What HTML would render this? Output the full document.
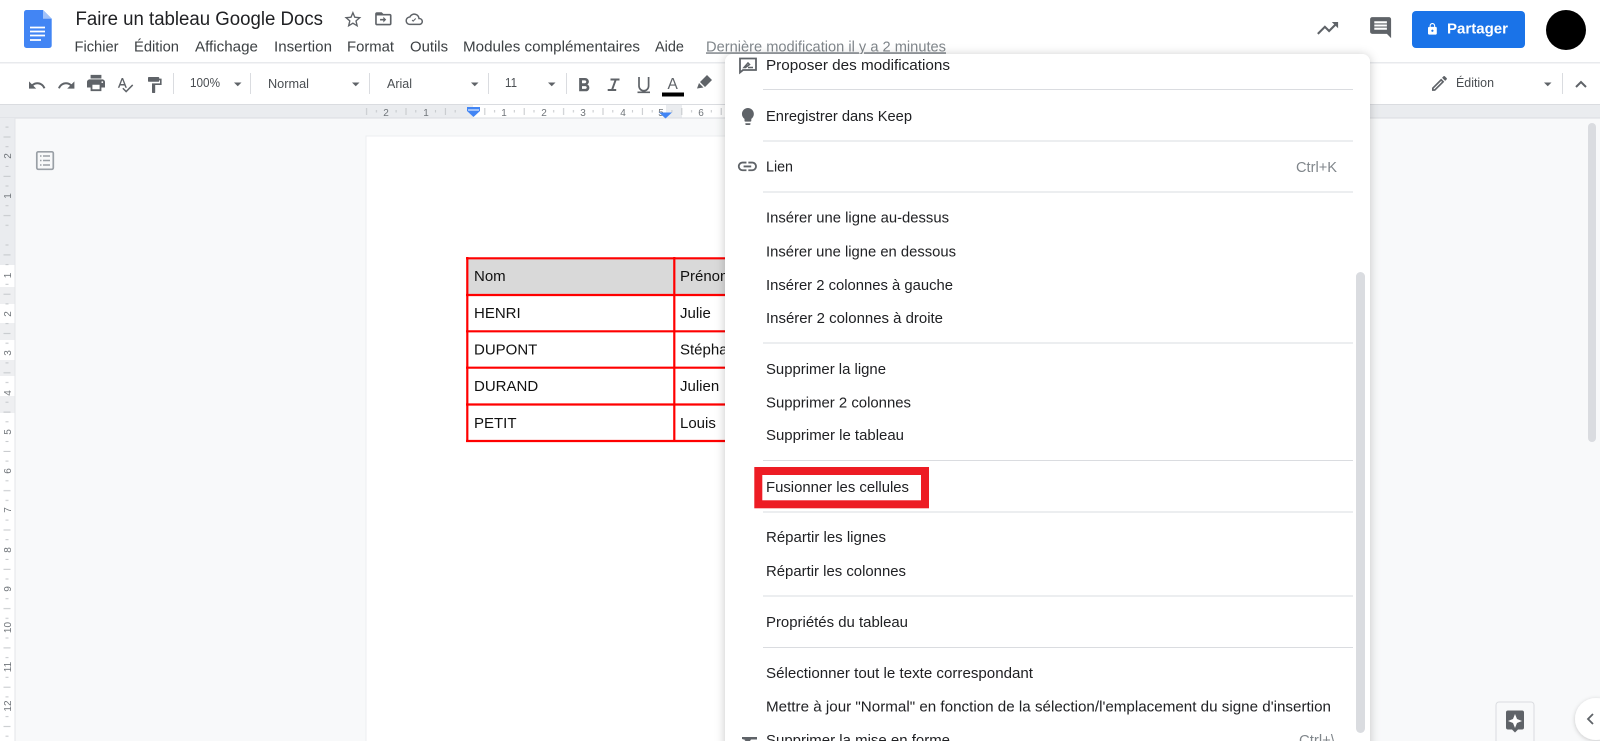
<!DOCTYPE html>
<html lang="fr">
<head>
<meta charset="utf-8">
<title>Faire un tableau Google Docs</title>
<style>
html,body{margin:0;padding:0;width:1600px;height:741px;overflow:hidden;background:#f8f9fa}
svg{display:block;font-family:"Liberation Sans",Arial,sans-serif;filter:blur(.3px)}
.m{font-size:15px;fill:#202124}
.h{font-size:15px;fill:#3c4043}
.t{font-size:13px;fill:#4a4e52}
.c{font-size:15px;fill:#111}
.r{font-size:10px;fill:#70757a;text-anchor:middle}
.i{fill:#5f6368}
</style>
</head>
<body>
<svg width="1600" height="741" viewBox="0 0 1600 741" xmlns="http://www.w3.org/2000/svg">
<defs>
<filter id="sh" x="-5%" y="-5%" width="110%" height="110%"><feDropShadow dx="0" dy="1" stdDeviation="5" flood-color="#000" flood-opacity=".22"/></filter>
<filter id="s2" x="-30%" y="-30%" width="160%" height="160%"><feDropShadow dx="0" dy="1" stdDeviation="2" flood-color="#000" flood-opacity=".2"/></filter>
<pattern id="tx" x="465" y="104" width="39.4" height="14" patternUnits="userSpaceOnUse">
<rect x="9.4" y="6" width="1" height="2.500" fill="#c4c7ca"/><rect x="29.100" y="6" width="1" height="2.500" fill="#c4c7ca"/><rect x="19.300" y="4" width="1" height="7" fill="#c4c7ca"/>
</pattern>
<pattern id="ty" x="0" y="156.500" width="15" height="39.3" patternUnits="userSpaceOnUse">
<rect x="5.500" y="9.400" width="3" height="1" fill="#c4c7ca"/><rect x="5.500" y="29" width="3" height="1" fill="#c4c7ca"/><rect x="3.500" y="19.300" width="7" height="1" fill="#c4c7ca"/>
</pattern>
</defs>

<!-- backgrounds -->
<rect width="1600" height="741" fill="#f8f9fa"/>
<rect width="1600" height="62" fill="#fff"/>
<rect y="62" width="1600" height="1.500" fill="#e8eaed"/>
<rect y="63.500" width="1600" height="40.500" fill="#fff"/>
<rect y="104" width="1600" height="14" fill="#eaecef"/>
<rect y="104" width="1600" height="1" fill="#dadce0"/>
<rect y="117.500" width="1600" height="1" fill="#dadce0"/>

<!-- horizontal ruler -->
<rect x="473" y="105" width="193" height="12.500" fill="#fff"/>
<rect x="682" y="105" width="60" height="12.500" fill="#fff"/>
<rect x="360" y="104" width="380" height="14" fill="url(#tx)"/>
<text class="r" x="386" y="116">2</text><text class="r" x="426" y="116">1</text>
<text class="r" x="504" y="116">1</text><text class="r" x="544" y="116">2</text>
<text class="r" x="583" y="116">3</text><text class="r" x="623" y="116">4</text>
<text class="r" x="661" y="116">5</text><text class="r" x="701" y="116">6</text>
<path d="M467 107h13v4l-6.500 6-6.500-6z" fill="#4285f4"/><rect x="468" y="109.500" width="11" height="1" fill="#fff"/>
<path d="M659 112.500h13l-6.500 6z" fill="#4285f4"/>

<!-- vertical ruler -->
<rect x="0" y="118" width="15" height="623" fill="#fff"/>
<rect x="0" y="118" width="15" height="147" fill="#eaecef"/>
<rect x="0" y="287" width="15" height="17" fill="#eeeff1"/>
<rect x="0" y="323" width="15" height="17" fill="#eeeff1"/>
<rect x="0" y="360" width="15" height="16" fill="#eeeff1"/>
<rect x="0" y="396" width="15" height="17" fill="#eeeff1"/>
<rect x="14.500" y="118" width="1" height="623" fill="#e3e5e8"/>
<rect x="0" y="118" width="14" height="623" fill="url(#ty)"/>
<text class="r" transform="translate(11,156) rotate(-90)">2</text>
<text class="r" transform="translate(11,196) rotate(-90)">1</text>
<text class="r" transform="translate(11,275.500) rotate(-90)">1</text>
<text class="r" transform="translate(11,314) rotate(-90)">2</text>
<text class="r" transform="translate(11,353) rotate(-90)">3</text>
<text class="r" transform="translate(11,393) rotate(-90)">4</text>
<text class="r" transform="translate(11,432) rotate(-90)">5</text>
<text class="r" transform="translate(11,471) rotate(-90)">6</text>
<text class="r" transform="translate(11,510) rotate(-90)">7</text>
<text class="r" transform="translate(11,550) rotate(-90)">8</text>
<text class="r" transform="translate(11,589) rotate(-90)">9</text>
<text class="r" transform="translate(11,627.500) rotate(-90)">10</text>
<text class="r" transform="translate(11,667) rotate(-90)">11</text>
<text class="r" transform="translate(11,706) rotate(-90)">12</text>

<!-- page -->
<rect x="366" y="136" width="816" height="620" fill="#fff" stroke="#eceef0" stroke-width="1"/>

<!-- outline icon -->
<rect x="36.800" y="151.800" width="16.500" height="17.500" rx="1.500" fill="none" stroke="#9aa0a6" stroke-width="1.700"/>
<path d="M40 156h1.500M43 156h7M40 160.500h1.500M43 160.500h7M40 165h1.500M43 165h7" stroke="#9aa0a6" stroke-width="1.500"/>

<!-- table -->
<rect x="468" y="259" width="206" height="35" fill="#d9d9d9"/>
<rect x="675" y="259" width="60" height="35" fill="#d9d9d9"/>
<path d="M466 258.300H740M466 295H740M466 331.300H740M466 367.700H740M466 404.500H740M466 441H740M467.300 257V442M674.300 257V442" stroke="#ff0000" stroke-width="2.200" fill="none"/>
<text class="c" x="474" y="281">Nom</text><text class="c" x="680" y="281">Prénom</text>
<text class="c" x="474" y="318">HENRI</text><text class="c" x="680" y="318">Julie</text>
<text class="c" x="474" y="354.500">DUPONT</text><text class="c" x="680" y="354.500">Stéphane</text>
<text class="c" x="474" y="391">DURAND</text><text class="c" x="680" y="391">Julien</text>
<text class="c" x="474" y="428">PETIT</text><text class="c" x="680" y="428">Louis</text>

<!-- doc logo -->
<path d="M26.500 10H43l8.700 8.700V45.500a2.500 2.500 0 0 1-2.500 2.500H26.500a2.500 2.500 0 0 1-2.500-2.500V12.500a2.500 2.500 0 0 1 2.500-2.500z" fill="#4285f4"/>
<path d="M43 10l8.700 8.700H43z" fill="#a1c2fa"/>
<path d="M30 27.500h15M30 31.500h15M30 35.500h15M30 40h11" stroke="#fff" stroke-width="1.800"/>

<!-- title + menu -->
<text x="75.500" y="25" font-size="19" fill="#202124" textLength="247.500" lengthAdjust="spacingAndGlyphs">Faire un tableau Google Docs</text>
<path class="i" transform="translate(342.700,9.300) scale(.85)" d="M22 9.240l-7.190-.62L12 2 9.190 8.630 2 9.240l5.460 4.730L5.820 21 12 17.270 18.180 21l-1.630-7.030L22 9.240zM12 15.400l-3.760 2.270 1-4.280-3.320-2.880 4.380-.38L12 6.100l1.710 4.040 4.380.38-3.320 2.880 1 4.280L12 15.400z"/>
<path class="i" transform="translate(373.500,9) scale(.82)" d="M20 6h-8l-2-2H4c-1.100 0-1.990.9-1.990 2L2 18c0 1.100.9 2 2 2h16c1.100 0 2-.9 2-2V8c0-1.100-.9-2-2-2zm0 12H4V8h16v10zM12 9.500l3.500 3.500-3.500 3.500v-2.500H8v-2h4z"/>
<path class="i" transform="translate(405.500,10.500) scale(.73)" d="M19.350 10.040C18.670 6.590 15.640 4 12 4 9.110 4 6.600 5.640 5.350 8.040 2.340 8.360 0 10.910 0 14c0 3.310 2.690 6 6 6h13c2.760 0 5-2.240 5-5 0-2.640-2.050-4.780-4.650-4.960zM19 18H6c-2.210 0-4-1.790-4-4s1.790-4 4-4h.71C7.370 7.690 9.480 6 12 6c3.040 0 5.500 2.460 5.500 5.500v.5H19c1.660 0 3 1.340 3 3s-1.340 3-3 3zM10.500 15.500l-2-2 1-1 1 1 3-3 1 1z"/>

<text class="h" x="74.500" y="51.300" textLength="44" lengthAdjust="spacingAndGlyphs">Fichier</text>
<text class="h" x="134" y="51.300" textLength="45" lengthAdjust="spacingAndGlyphs">Édition</text>
<text class="h" x="195" y="51.300" textLength="63" lengthAdjust="spacingAndGlyphs">Affichage</text>
<text class="h" x="274" y="51.300" textLength="58" lengthAdjust="spacingAndGlyphs">Insertion</text>
<text class="h" x="347" y="51.300" textLength="47" lengthAdjust="spacingAndGlyphs">Format</text>
<text class="h" x="410" y="51.300" textLength="38" lengthAdjust="spacingAndGlyphs">Outils</text>
<text class="h" x="463" y="51.300" textLength="177" lengthAdjust="spacingAndGlyphs">Modules complémentaires</text>
<text class="h" x="655" y="51.300" textLength="29" lengthAdjust="spacingAndGlyphs">Aide</text>
<text x="706" y="51.300" font-size="15" fill="#80868b" textLength="240" lengthAdjust="spacingAndGlyphs" text-decoration="underline">Dernière modification il y a 2 minutes</text>

<!-- toolbar icons -->
<path class="i" transform="translate(27.400,75.800) scale(.8)" d="M12.500 8c-2.650 0-5.050.99-6.900 2.600L2 7v9h9l-3.620-3.620c1.390-1.160 3.160-1.880 5.120-1.880 3.540 0 6.550 2.310 7.600 5.500l2.370-.78C21.080 11.030 17.150 8 12.500 8z"/>
<path class="i" transform="translate(56.800,75.800) scale(.8)" d="M18.400 10.600C16.550 8.990 14.150 8 11.500 8c-4.650 0-8.580 3.030-9.960 7.220L3.900 16c1.050-3.190 4.050-5.500 7.600-5.500 1.950 0 3.730.72 5.120 1.880L13 16h9V7l-3.600 3.600z"/>
<path class="i" transform="translate(85.200,72.200) scale(.9)" d="M19 8H5c-1.660 0-3 1.340-3 3v6h4v4h12v-4h4v-6c0-1.660-1.340-3-3-3zm-3 11H8v-5h8v5zm3-7c-.55 0-1-.45-1-1s.45-1 1-1 1 .45 1 1-.45 1-1 1zm-1-9H6v4h12V3z"/>
<path class="i" transform="translate(116,75.700) scale(.75)" d="M12.450 16h2.090L9.430 3H7.570L2.460 16h2.090l1.120-3h5.640l1.140 3zm-6.020-5L8.500 5.480 10.570 11H6.430zm15.160.59l-8.090 8.090L9.830 16l-1.410 1.410 5.090 5.090L23 13l-1.410-1.410z"/>
<path class="i" transform="translate(144.800,75.400) scale(.8)" d="M18 4V3c0-.55-.45-1-1-1H5c-.55 0-1 .45-1 1v4c0 .55.45 1 1 1h12c.55 0 1-.45 1-1V6h1v4H9v11c0 .55.45 1 1 1h2c.55 0 1-.45 1-1v-9h8V4h-3z"/>
<path d="M173.500 73v21M250.500 73v21M369.500 73v21M488.500 73v21M566.500 73v21M1562.500 73v21" stroke="#dadce0" stroke-width="1"/>

<text class="t" x="190" y="87" textLength="30" lengthAdjust="spacingAndGlyphs">100%</text>
<text class="t" x="268" y="88" textLength="41" lengthAdjust="spacingAndGlyphs">Normal</text>
<text class="t" x="387" y="88" textLength="25" lengthAdjust="spacingAndGlyphs">Arial</text>
<text class="t" x="505" y="87" textLength="12" lengthAdjust="spacingAndGlyphs">11</text>
<text class="t" x="1456" y="87" textLength="38" lengthAdjust="spacingAndGlyphs">Édition</text>
<path class="i" d="M234 82.500h7.500l-3.750 3.750zM352 82.500h7.500l-3.750 3.750zM471 82.500h7.500l-3.750 3.750zM548 82.500h7.500l-3.750 3.750zM1544 82.500h7.500l-3.750 3.750z"/>

<path class="i" transform="translate(572.500,74.200) scale(.95)" d="M15.600 10.790c.97-.67 1.650-1.770 1.650-2.790 0-2.260-1.750-4-4-4H7v14h7.040c2.090 0 3.710-1.700 3.710-3.790 0-1.520-.86-2.820-2.150-3.420zM10 6.500h3c.83 0 1.500.67 1.500 1.500s-.67 1.500-1.500 1.500h-3v-3zm3.500 9H10v-3h3.500c.83 0 1.500.67 1.500 1.500s-.67 1.500-1.500 1.500z"/>
<path d="M610.500 79.500h9M607.700 90h8.500M615.800 79.500l-3.800 10.500" fill="none" stroke="#5f6368" stroke-width="1.900"/>
<path d="M639 77v9a4.800 4.800 0 0 0 9.600 0v-9M637.500 92.300h12.500" fill="none" stroke="#5f6368" stroke-width="1.700"/>
<text x="672.700" y="89" font-size="15.500" fill="#5f6368" text-anchor="middle">A</text>
<rect x="662" y="92.500" width="22" height="4" fill="#000"/>
<path class="i" d="M707 75l5 5-7 7-5-5zM699 83l4.500 4.500-6.500 1z"/>

<path class="i" transform="translate(1429.500,73.500) scale(.83)" d="M14.060 9.020l.92.92L5.920 19H5v-.92l9.060-9.060M17.660 3c-.25 0-.51.1-.7.29l-1.830 1.830 3.750 3.750 1.830-1.830c.39-.39.39-1.020 0-1.410l-2.340-2.340c-.2-.2-.45-.29-.71-.29zm-3.600 3.190L3 17.250V21h3.750L17.810 9.940l-3.750-3.750z"/>
<path d="M1576 87l5-5 5 5" fill="none" stroke="#5f6368" stroke-width="2"/>

<!-- top right -->
<path class="i" transform="translate(1315,15.700) scale(1.05)" d="M16 6l2.290 2.290-4.880 4.880-4-4L2 16.590 3.410 18l6-6 4 4 6.300-6.290L22 12V6z"/>
<path class="i" transform="translate(1368,15) scale(1.05)" d="M21.990 4c0-1.100-.89-2-1.990-2H4c-1.100 0-2 .9-2 2v12c0 1.100.9 2 2 2h14l4 4-.01-18zM18 14H6v-2h12v2zm0-3H6V9h12v2zm0-3H6V6h12v2z"/>
<rect x="1412" y="11" width="113" height="37" rx="4" fill="#1a73e8"/>
<path fill="#fff" transform="translate(1425.800,22.500) scale(.55)" d="M18 8h-1V6c0-2.760-2.240-5-5-5S7 3.240 7 6v2H6c-1.100 0-2 .9-2 2v10c0 1.100.9 2 2 2h12c1.100 0 2-.9 2-2V10c0-1.100-.9-2-2-2zm-6 9c-1.100 0-2-.9-2-2s.9-2 2-2 2 .9 2 2-.9 2-2 2zm3.100-9H8.900V6c0-1.710 1.390-3.100 3.100-3.100 1.710 0 3.100 1.390 3.100 3.100v2z"/>
<text x="1447" y="33.500" font-size="15" font-weight="bold" fill="#fff" textLength="61" lengthAdjust="spacingAndGlyphs">Partager</text>
<circle cx="1566" cy="30" r="20" fill="#000"/>

<!-- right scrollbar -->
<rect x="1588" y="123" width="8" height="319" rx="4" fill="#dadce0"/>

<!-- bottom right -->
<rect x="1496" y="702" width="38" height="42" rx="3" fill="#f8f9fa" stroke="#dadce0"/>
<path d="M1508 710.500h14a2 2 0 0 1 2 2v15a2 2 0 0 1-2 2h-4l-3 3-3-3h-4a2 2 0 0 1-2-2v-15a2 2 0 0 1 2-2z" fill="#5f6368"/>
<path d="M1515 714l2 5 5 2-5 2-2 5-2-5-5-2 5-2z" fill="#fff"/>
<circle cx="1596" cy="719" r="21" fill="#fff" filter="url(#s2)"/>
<path d="M1593 714l-5 5 5 5" fill="none" stroke="#5f6368" stroke-width="1.800"/>

<!-- context menu -->
<path d="M733 54H1362a8 8 0 0 1 8 8V760H725V62a8 8 0 0 1 8-8z" fill="#fff" filter="url(#sh)"/>
<path d="M763 89.500H1353M763 141H1353M763 192H1353M763 343H1353M763 460.500H1353M763 512H1353M763 596H1353M763 647.500H1353" stroke="#dadce0" stroke-width="1"/>
<rect x="1356" y="272" width="9" height="461" rx="4.500" fill="#dadce0"/>

<!-- menu icons -->
<path d="M740 58.500h16v11.500h-13l-3 2.500z" fill="none" stroke="#5f6368" stroke-width="1.800"/>
<path d="M744 67.500l4-4.500 1.500 1.500-4 3zM748 67.500h5" fill="none" stroke="#5f6368" stroke-width="1.500"/>
<path class="i" transform="translate(737.700,106.300) scale(.85)" d="M9 21c0 .55.45 1 1 1h4c.55 0 1-.45 1-1v-1H9v1zm3-19C8.140 2 5 5.140 5 9c0 2.380 1.190 4.470 3 5.740V17c0 .55.45 1 1 1h6c.55 0 1-.45 1-1v-2.260c1.810-1.270 3-3.360 3-5.740 0-3.860-3.140-7-7-7z"/>
<path class="i" transform="translate(736,155) scale(.95)" d="M3.900 12c0-1.710 1.390-3.100 3.100-3.100h4V7H7c-2.760 0-5 2.240-5 5s2.240 5 5 5h4v-1.900H7c-1.710 0-3.100-1.390-3.100-3.100zM8 13h8v-2H8v2zm9-6h-4v1.900h4c1.710 0 3.100 1.390 3.100 3.100s-1.390 3.100-3.100 3.100h-4V17h4c2.760 0 5-2.240 5-5s-2.240-5-5-5z"/>
<path d="M742 737h15v2.500h-6l-1 1.500 2 2.500h-10l3.500-3.500-3.500-1z" fill="#5f6368"/>

<!-- menu text -->
<text class="m" x="766" y="70" textLength="184" lengthAdjust="spacingAndGlyphs">Proposer des modifications</text>
<text class="m" x="766" y="121" textLength="146" lengthAdjust="spacingAndGlyphs">Enregistrer dans Keep</text>
<text class="m" x="766" y="171.700" textLength="27" lengthAdjust="spacingAndGlyphs">Lien</text>
<text x="1296" y="172" font-size="15" fill="#80868b" textLength="41" lengthAdjust="spacingAndGlyphs">Ctrl+K</text>
<text class="m" x="766" y="222.700" textLength="183" lengthAdjust="spacingAndGlyphs">Insérer une ligne au-dessus</text>
<text class="m" x="766" y="256.400" textLength="190" lengthAdjust="spacingAndGlyphs">Insérer une ligne en dessous</text>
<text class="m" x="766" y="290" textLength="187" lengthAdjust="spacingAndGlyphs">Insérer 2 colonnes à gauche</text>
<text class="m" x="766" y="322.800" textLength="177" lengthAdjust="spacingAndGlyphs">Insérer 2 colonnes à droite</text>
<text class="m" x="766" y="373.800" textLength="120" lengthAdjust="spacingAndGlyphs">Supprimer la ligne</text>
<text class="m" x="766" y="407.400" textLength="145" lengthAdjust="spacingAndGlyphs">Supprimer 2 colonnes</text>
<text class="m" x="766" y="440" textLength="138" lengthAdjust="spacingAndGlyphs">Supprimer le tableau</text>

<text class="m" x="766" y="492" textLength="143" lengthAdjust="spacingAndGlyphs">Fusionner les cellules</text>
<rect x="758.300" y="471" width="166.700" height="33.300" fill="none" stroke="#ed1c24" stroke-width="8"/>

<text class="m" x="766" y="542" textLength="120" lengthAdjust="spacingAndGlyphs">Répartir les lignes</text>
<text class="m" x="766" y="575.800" textLength="140" lengthAdjust="spacingAndGlyphs">Répartir les colonnes</text>
<text class="m" x="766" y="626.800" textLength="142" lengthAdjust="spacingAndGlyphs">Propriétés du tableau</text>
<text class="m" x="766" y="678" textLength="267" lengthAdjust="spacingAndGlyphs">Sélectionner tout le texte correspondant</text>
<text class="m" x="766" y="711.500" textLength="565" lengthAdjust="spacingAndGlyphs">Mettre à jour "Normal" en fonction de la sélection/l'emplacement du signe d'insertion</text>
<text class="m" x="766" y="745" textLength="184" lengthAdjust="spacingAndGlyphs">Supprimer la mise en forme</text>
<text x="1299" y="745" font-size="15" fill="#80868b" textLength="36" lengthAdjust="spacingAndGlyphs">Ctrl+\</text>
</svg>
</body>
</html>
